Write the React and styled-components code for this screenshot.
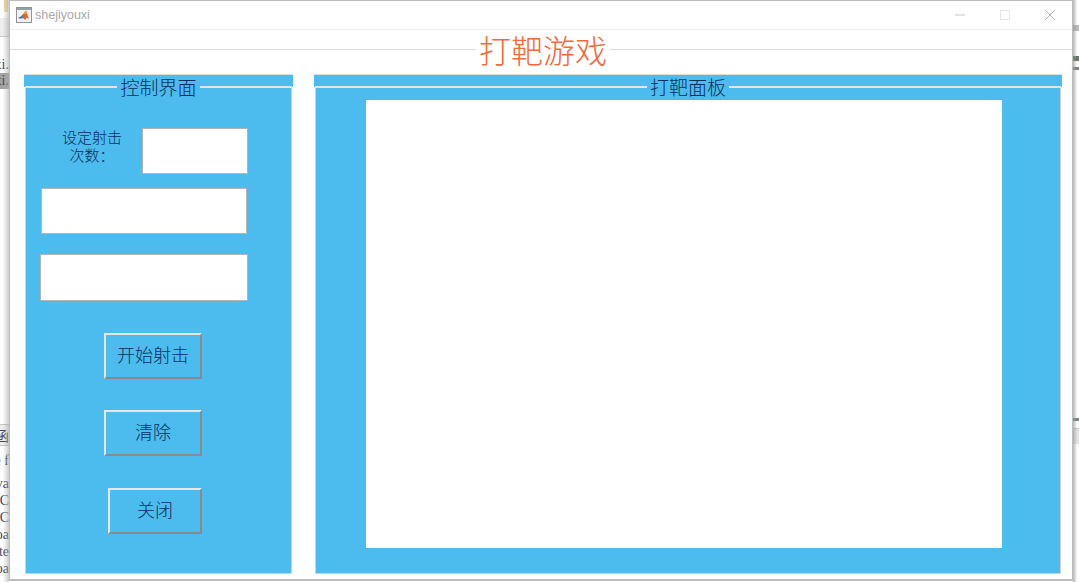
import React from 'react';
import styled, { createGlobalStyle } from 'styled-components';

const cjk = '"Liberation Serif", "Noto Sans CJK SC", serif';
const blue = '#4cbbed';
const ink = '#07305e';

const GlobalStyle = createGlobalStyle`
  html, body {
    margin: 0;
    height: 582px;
    overflow: hidden;
    background: #fff;
  }
`;

const Desktop = styled.div`
  display: flex;
  width: 1079px;
  height: 582px;
`;

const LeftStrip = styled.div`
  position: relative;
  flex: 0 0 9px;
  display: flex;
  flex-direction: column;
  overflow: hidden;
  font: 14px ${cjk};
  color: #445;

  &::after {
    content: '';
    position: absolute;
    inset: 0;
    background: linear-gradient(90deg, rgba(190, 190, 190, 0) 30%, rgba(170, 170, 170, .6));
  }
`;

const RightStrip = styled.div`
  position: relative;
  flex: 0 0 6px;
  display: flex;
  flex-direction: column;
  overflow: hidden;

  &::after {
    content: '';
    position: absolute;
    inset: 0;
    background: linear-gradient(90deg, rgba(150, 150, 150, .7), rgba(200, 200, 200, 0) 70%);
  }
`;

const Folder = styled.div`
  width: 4px;
  height: 12px;
  margin-left: 4px;
  background: #f3d7a2;
`;

const Band = styled.div`
  flex: 0 0 ${p => p.$height}px;
  background: ${p => p.$color || 'transparent'};
  border-bottom: ${p => (p.$line ? '1px solid #c8c8c8' : 'none')};
`;

const Clipped = styled.div`
  flex: 0 0 ${p => p.$height || 17}px;
  display: flex;
  justify-content: flex-end;
  align-items: center;
  white-space: nowrap;
  background: ${p => p.$color || 'transparent'};
`;

const Window = styled.div`
  flex: 0 0 1064px;
  height: 581px;
  box-sizing: border-box;
  display: flex;
  flex-direction: column;
  background: #fff;
  border: solid #bcbcbc;
  border-width: 1px 1px 2px 1px;
`;

const TitleBar = styled.div`
  flex: 0 0 28px;
  display: flex;
  align-items: center;
  padding-left: 6px;
  border-bottom: 1px solid #f0f0f0;
`;

const AppName = styled.span`
  margin-left: 3px;
  font: 12.5px "Liberation Sans", sans-serif;
  color: #a8a8a8;
`;

const WindowControls = styled.div`
  margin-left: auto;
  display: flex;
  align-items: center;
  padding-right: 17px;
  gap: 35px;

  & svg {
    display: block;
  }
`;

const Heading = styled.h1`
  flex: 0 0 39px;
  margin: 0;
  display: flex;
  align-items: center;
  gap: 3px;
  font: 300 32px/39px ${cjk};
  color: #f2693a;

  &::before,
  &::after {
    content: '';
    flex: 1;
    height: 0;
    border-bottom: 1px solid #dcdcdc;
  }

  &::before {
    flex: 0 0 466px;
  }
`;

// the CJK fallback sits high in its line box, nudged down onto the rule
const Nudged = styled.span`
  position: relative;
  top: ${p => p.$by}px;
`;

const Content = styled.div`
  display: flex;
  gap: 21px;
  padding: 6px 0 0 14px;
`;

const Panel = styled.section`
  flex: 0 0 ${p => p.$width}px;
  height: 499px;
  box-sizing: border-box;
  padding: 0 1px;
  background: linear-gradient(${blue} 12px, transparent 12px);
  box-shadow: 0 -1px 0 #dedede;
`;

const Frame = styled.fieldset`
  height: 100%;
  box-sizing: border-box;
  min-width: 0;
  margin: 0;
  padding: 0;
  background: ${blue};
  border: 1px solid #d2d2d2;
  border-top: 2px solid #e4e4e4;
`;

const Legend = styled.legend`
  margin: 0 auto;
  padding: 0 3px;
  font: 300 19px/24px ${cjk};
  color: ${ink};
`;

const Controls = styled.div`
  display: flex;
  flex-direction: column;
`;

const CountRow = styled.div`
  display: flex;
  align-items: flex-start;
  margin-top: 29px;
  padding-left: 16px;
`;

const CountLabel = styled.label`
  width: 100px;
  box-sizing: border-box;
  margin-top: 1px;
  padding: 0 20px;
  font: 300 15px/18px ${cjk};
  text-align: center;
  color: ${ink};
`;

const Field = styled.input`
  display: block;
  box-sizing: border-box;
  width: ${p => p.$width}px;
  height: ${p => p.$height || 46}px;
  margin: ${p => p.$top || 0}px 0 0 ${p => p.$left || 0}px;
  padding: 0;
  background: #fff;
  border: 1px solid #b4b4b4;
  border-radius: 0;
  outline: none;
`;

const ActionButton = styled.button`
  display: block;
  box-sizing: border-box;
  width: ${p => p.$width}px;
  height: 46px;
  margin: ${p => p.$top}px 0 0 ${p => p.$left}px;
  padding: 0;
  background: ${blue};
  border: 2px solid;
  border-color: #e6e6e6 #8a8a8a #8a8a8a #e6e6e6;
  font: 300 18px/1 ${cjk};
  color: ${ink};
`;

const Board = styled.div`
  width: 636px;
  height: 448px;
  margin: 1px 0 0 50px;
  background: #fff;
`;

const MatlabIcon = () => (
  <svg width="16" height="16" viewBox="0 0 16 16">
    <rect x=".5" y=".5" width="15" height="15" fill="#f2f2f2" stroke="#8f9496" />
    <rect x="1" y="1" width="14" height="2" fill="#8fa0a8" />
    <path d="M2 11l3-1.5L8 6l2-2.5 3 8.5-2-1.5-2 2.5-2-2-3 .5z" fill="#e8622c" />
    <path d="M2 11l3-1.5L7.5 7 7 11l-2 .5z" fill="#3a7fc0" />
    <path d="M8 6l2-2.5 1 3-2 1z" fill="#f4a13a" />
  </svg>
);

const Controls2 = () => (
  <WindowControls>
    <svg width="10" height="10" viewBox="0 0 10 10"><path d="M0 5h10" stroke="#c4c4c4" strokeWidth="1" /></svg>
    <svg width="10" height="10" viewBox="0 0 10 10"><rect x=".5" y=".5" width="9" height="9" fill="none" stroke="#e6e6e6" /></svg>
    <svg width="10" height="10" viewBox="0 0 10 10"><path d="M0 0l10 10M10 0L0 10" stroke="#b4b4b4" strokeWidth="1" /></svg>
  </WindowControls>
);

const App = () => (
  <Desktop>
    <GlobalStyle />
    <LeftStrip>
      <Folder />
      <Band $height={6} />
      <Band $height={18} $color="#eeeeee" $line />
      <Band $height={20} />
      <Clipped $height={15}>xi.</Clipped>
      <Clipped $height={16} $color="#a3a3a3">xi.</Clipped>
      <Band $height={335} />
      <Band $height={1} $color="#c4c4c4" />
      <Clipped $height={14} $color="#eeeeee">函</Clipped>
      <Band $height={1} $color="#c4c4c4" />
      <Band $height={6} />
      <Clipped>e f</Clipped>
      <Band $height={6} />
      <Clipped>va</Clipped>
      <Clipped>C</Clipped>
      <Clipped>C</Clipped>
      <Clipped>oa</Clipped>
      <Clipped>te</Clipped>
      <Clipped>oa</Clipped>
    </LeftStrip>

    <Window>
      <TitleBar>
        <MatlabIcon />
        <AppName>shejiyouxi</AppName>
        <Controls2 />
      </TitleBar>
      <Heading><Nudged $by={3}>打靶游戏</Nudged></Heading>
      <Content>
        <Panel $width={269}>
          <Frame>
            <Legend><Nudged $by={2}>控制界面</Nudged></Legend>
            <Controls>
              <CountRow>
                <CountLabel>设定射击次数：</CountLabel>
                <Field $width={106} />
              </CountRow>
              <Field $width={206} $top={14} $left={15} />
              <Field $width={208} $height={47} $top={20} $left={14} />
              <ActionButton $width={98} $top={32} $left={78}>开始射击</ActionButton>
              <ActionButton $width={98} $top={31} $left={78}>清除</ActionButton>
              <ActionButton $width={94} $top={32} $left={82}>关闭</ActionButton>
            </Controls>
          </Frame>
        </Panel>
        <Panel $width={748}>
          <Frame>
            <Legend><Nudged $by={2}>打靶面板</Nudged></Legend>
            <Board />
          </Frame>
        </Panel>
      </Content>
    </Window>

    <RightStrip>
      <Band $height={25} />
      <Band $height={6} $color="#b8bdb8" />
      <Band $height={25} />
      <Band $height={5} $color="#5f7d5f" />
      <Band $height={6} />
      <Band $height={3} $color="#7c8a7c" />
      <Band $height={348} />
      <Band $height={3} $color="#7c8a7c" />
      <Band $height={7} />
      <Band $height={1} $color="#c4c4c4" />
      <Band $height={15} $color="#e4e4e4" />
    </RightStrip>
  </Desktop>
);

export default App;
